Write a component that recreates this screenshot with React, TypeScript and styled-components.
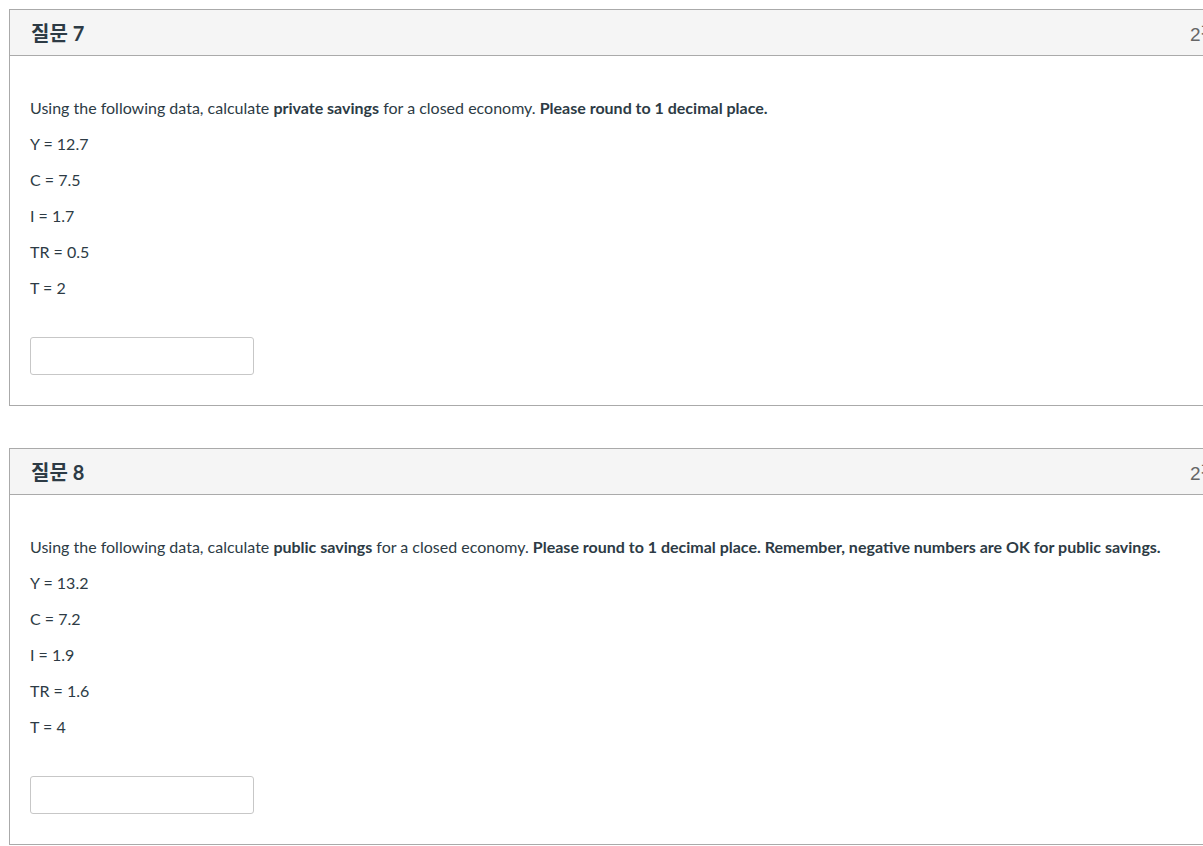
import React from "react";
import styled, { createGlobalStyle } from "styled-components";

const Global = createGlobalStyle`
  html, body { margin: 0; padding: 0; background: #fff; overflow: hidden; }
  body { font-family: Lato, "Noto Sans CJK KR", sans-serif; color: #2d3b45; }
`;

const Page = styled.div`
  display: flex;
  flex-direction: column;
  gap: 42px;
  padding: 9px 0 0 9px;
  width: 1260px;
`;

const Card = styled.section`
  border: 1px solid #aaaaaa;
  background: #fff;
  width: 1229px;
`;

const Header = styled.header`
  display: flex;
  align-items: center;
  justify-content: space-between;
  height: 45px;
  padding: 0 21px;
  background: #f5f5f5;
  border-bottom: 1px solid #aaaaaa;
`;

const Title = styled.h2`
  margin: 0;
  font-family: Lato, "Noto Sans CJK KR", sans-serif;
  font-size: 20px;
  font-weight: 700;
  color: #2d3b45;
`;

const Points = styled.span`
  font-family: "Liberation Sans", "Noto Sans CJK KR", sans-serif;
  font-size: 19px;
  color: #666;
`;

const Body = styled.div`
  padding: 42px 20px 30px;
`;

const Para = styled.p`
  margin: 0 0 16px;
  font-size: 16px;
  line-height: 20px;
  color: #2d3b45;
`;

const Answer = styled.input`
  display: block;
  margin-top: 39px;
  width: 224px;
  height: 38px;
  box-sizing: border-box;
  border: 1px solid #c7c7c7;
  border-radius: 3px;
  background: #fff;
`;

type Q = { n: number; intro: React.ReactNode; data: string[] };

const questions: Q[] = [
  {
    n: 7,
    intro: (
      <>
        Using the following data, calculate <b>private savings</b> for a closed
        economy. <b>Please round to 1 decimal place.</b>
      </>
    ),
    data: ["Y = 12.7", "C = 7.5", "I = 1.7", "TR = 0.5", "T = 2"],
  },
  {
    n: 8,
    intro: (
      <>
        Using the following data, calculate <b>public savings</b> for a closed
        economy.{" "}
        <b>
          Please round to 1 decimal place. Remember, negative numbers are OK
          for public savings.
        </b>
      </>
    ),
    data: ["Y = 13.2", "C = 7.2", "I = 1.9", "TR = 1.6", "T = 4"],
  },
];

export default function App() {
  return (
    <>
      <Global />
      <Page>
        {questions.map((q) => (
          <Card key={q.n}>
            <Header>
              <Title>질문 {q.n}</Title>
              <Points>2점</Points>
            </Header>
            <Body>
              <Para>{q.intro}</Para>
              {q.data.map((d) => (
                <Para key={d}>{d}</Para>
              ))}
              <Answer type="text" />
            </Body>
          </Card>
        ))}
      </Page>
    </>
  );
}
